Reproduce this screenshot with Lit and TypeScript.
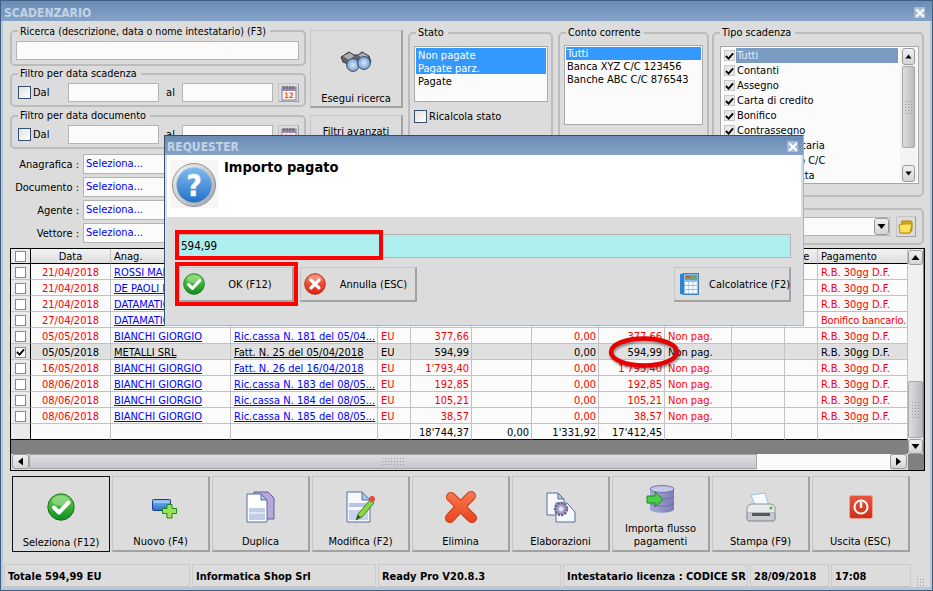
import { LitElement, html, css, svg } from "lit";
import { customElement } from "lit/decorators.js";

const check = (s: number) => html`<svg width=${s} height=${s} viewBox="0 0 28 28"><circle cx="14" cy="14" r="13.2" fill="url(#gGreen)" stroke="#14761c"/><ellipse cx="14" cy="8" rx="9" ry="5" fill="#fff" opacity=".3"/><path d="M7 14.5l5 5 9.5-10" fill="none" stroke="#fff" stroke-width="4" stroke-linecap="round" stroke-linejoin="round"/></svg>`;
const xcirc = (s: number) => html`<svg width=${s} height=${s} viewBox="0 0 28 28"><circle cx="14" cy="14" r="13.2" fill="url(#gRed)" stroke="#b32010"/><ellipse cx="14" cy="8" rx="9" ry="5" fill="#fff" opacity=".25"/><path d="M9 9l10 10M19 9L9 19" fill="none" stroke="#fff" stroke-width="4.2" stroke-linecap="round"/></svg>`;
const question = html`<svg width="48" height="48" viewBox="0 0 48 48"><circle cx="24" cy="25" r="21.5" fill="url(#gSilver)" stroke="#8f9498"/><circle cx="24" cy="25" r="17.5" fill="url(#gBlue)"/><text x="24" y="36" text-anchor="middle" font-family="DejaVu Sans" font-weight="700" font-size="30" fill="#fff" stroke="#dfe6f3" stroke-width=".4">?</text></svg>`;
const binoculars = html`<svg width="32" height="22" viewBox="0 0 32 22"><path d="M1 7l8-5 5 3h4l4-3 7 4 2 6-8 2-5-4h-4l-4 5-7-3z" fill="#62666c" stroke="#33373d"/><path d="M3 6l7-3 4 3-5 4zM18 5l5-2 5 3-5 3z" fill="#aab0b6"/><circle cx="13" cy="15" r="6.4" fill="url(#gLens)" stroke="#454a50"/><circle cx="24" cy="13" r="6.4" fill="url(#gLens)" stroke="#454a50"/></svg>`;
const calendar = html`<svg width="16" height="16" viewBox="0 0 16 16"><rect x="1" y="2" width="14" height="13" fill="#f8f4fc" stroke="#8a7f97"/><rect x="1" y="2" width="14" height="4" fill="#9a8aa8"/><path d="M3 1v3M6 1v3M9 1v3M12 1v3" stroke="#555" /><text x="8" y="13" text-anchor="middle" font-size="7.5" font-weight="700" font-family="DejaVu Sans" fill="#f06010">12</text></svg>`;
const folder = html`<svg width="16" height="15" viewBox="0 0 16 15"><path d="M4 2h9l1 1v8l-2 3H2z" fill="#d9ad19" stroke="#a98510"/><path d="M1 6l4-1h9l-2 9H2z" fill="#fce35c" stroke="#b6900f"/></svg>`;
const calc = html`<svg width="20" height="24" viewBox="0 0 20 24"><path d="M0 2l5-1v22l-5-1z" fill="#2f86cf"/><rect x="3.500" y="1.500" width="15" height="21" fill="#8cc0ec" stroke="#3b7db8"/><rect x="5" y="3" width="12" height="5" fill="#78a078"/><rect x="6" y="4" width="4" height="2" fill="#d84a3a"/>${[0, 1, 2].map((r) => [0, 1, 2].map((c) => svg`<rect x=${5 + c * 4.2} y=${10 + r * 4} width="3.400" height="3" fill="#fff"/>`))}</svg>`;
const plusIcon = html`<svg width="34" height="24" viewBox="0 0 34 24"><g transform="translate(8 2)"><rect x=".5" y="2.500" width="18" height="11" rx="1" fill="url(#gBlue)" stroke="#1c3f9a"/><rect x="1.500" y="3.500" width="16" height="2.500" fill="#9cc4f4"/><path d="M15 7.500h5v4h4.500v5H20v4.500h-5v-4.500h-4.500v-5H15z" fill="#9ae35a" stroke="#1d8a1d"/></g></svg>`;
const dupIcon = html`<svg width="30" height="32" viewBox="0 0 30 32"><path d="M8 1h14l6 6v21H8z" fill="#b6a8d8" stroke="#6a5a98"/><path d="M1 3h14l6 6v22H1z" fill="#fff" stroke="#556f9c"/><path d="M15 3v6h6z" fill="#a8c8ea" stroke="#556f9c"/><rect x="3" y="17" width="16" height="12" fill="#c2cce8"/><path d="M3 22h16" stroke="#fff"/></svg>`;
const editIcon = html`<svg width="30" height="32" viewBox="0 0 30 32"><path d="M1 1h15l8 8v22H1z" fill="#f6f8fd" stroke="#556f9c"/><path d="M16 1v8h8z" fill="#a8c8ea" stroke="#556f9c"/><rect x="3" y="12" width="19" height="4" fill="#b8c4e4"/><rect x="3" y="19" width="19" height="10" fill="#c8d2ec"/><path d="M10 29l2-6L24 9l4 3-12 14z" fill="#8ed63e" stroke="#3b8a1e"/><circle cx="26" cy="8" r="3" fill="#e54b3a"/><path d="M10 29l2-5 3 2z" fill="#444"/></svg>`;
const delIcon = html`<svg width="32" height="32" viewBox="0 0 32 32"><path d="M6 6c6 5 14 15 21 21M26 5C20 11 11 20 5 27" fill="none" stroke="#cf3a15" stroke-width="10" stroke-linecap="round"/><path d="M6 6c6 5 14 15 21 21M26 5C20 11 11 20 5 27" fill="none" stroke="url(#gOrange)" stroke-width="8" stroke-linecap="round"/></svg>`;
const gearIcon = html`<svg width="30" height="31" viewBox="0 0 30 31"><path d="M1 1h11l6 6v16H1z" fill="#f6f8fd" stroke="#556f9c"/><path d="M12 1v6h6z" fill="#a8c8ea" stroke="#556f9c"/><path d="M10 11h11l8 9v10H10z" fill="#f6f8fd" stroke="#556f9c"/><circle cx="15" cy="17" r="6" fill="#a49cc4" stroke="#6a6492" stroke-dasharray="2.4 1" stroke-width="2.4"/><circle cx="15" cy="17" r="2.4" fill="#e4e4f0"/></svg>`;
const dbIcon = html`<svg width="30" height="30" viewBox="0 0 30 30"><path d="M4 4v20c0 5 24 5 24 0V4z" fill="url(#gDb)"/><ellipse cx="16" cy="4" rx="12" ry="3.400" fill="#c6c6ea" stroke="#6f6fa8"/><path d="M4 11c0 4 24 4 24 0M4 18c0 4 24 4 24 0" fill="none" stroke="#6f6fa8"/><path d="M1 11h8V7l8 7.500-8 7.500v-4H1z" fill="#4ccc4c" stroke="#1d8a1d"/></svg>`;
const printIcon = html`<svg width="32" height="30" viewBox="0 0 32 30"><path d="M6 3l14-2 4 13H10z" fill="#f4fbff" stroke="#a0c0d8"/><path d="M2 15c0-1 3-3 5-3h18c2 0 5 2 5 3v6H2z" fill="#e8eaec" stroke="#8a9098"/><path d="M2 21v6c0 1 1 2 2 2h24c1 0 2-1 2-2v-6" fill="#c8ccd0" stroke="#7e8388"/><path d="M7 21h18v3H7z" fill="#54585c"/><circle cx="26" cy="16" r="1.600" fill="#34c040"/></svg>`;
const powerIcon = html`<svg width="24" height="24" viewBox="0 0 24 24"><rect x=".5" y=".5" width="23" height="23" rx="2" fill="url(#gRedSq)" stroke="#f0a090"/><circle cx="12" cy="12" r="6.500" fill="none" stroke="#fff" stroke-width="2"/><path d="M12 7v6" stroke="#fff" stroke-width="2.400"/></svg>`;
const closeX = html`<svg width="10" height="10" viewBox="0 0 10 10"><path d="M2 2l6 6M8 2L2 8" stroke="#fff" stroke-width="2.200" stroke-linecap="square"/></svg>`;
const arrow = (d: string) => html`<svg width="9" height="9" viewBox="0 0 9 9"><path d=${d} fill="#000"/></svg>`;
const UP = "M4.500 2L8.500 7H.5z", DOWN = "M.5 2h8L4.500 7z", LEFT = "M2 4.500L7 .5v8z", RIGHT = "M7 4.500L2 .5v8z";
const tick = html`<svg width="10" height="10" viewBox="0 0 10 10"><path d="M1 5l3 3 5-6" fill="none" stroke="#000" stroke-width="2"/></svg>`;
const dots = (c: number, r: number) => html`<span class="dots" style="grid-template-columns:repeat(${c},1px)">${Array.from({ length: c * r }).map(() => html`<i></i>`)}</span>`;

type Row = { d: string; a: string; doc?: string; v?: string; pay: string; sel?: boolean; on?: boolean };
const rows: Row[] = [
  { d: "21/04/2018", a: "ROSSI MARIO", pay: "R.B. 30gg D.F." },
  { d: "21/04/2018", a: "DE PAOLI LUCA", pay: "R.B. 30gg D.F." },
  { d: "21/04/2018", a: "DATAMATIC", pay: "R.B. 30gg D.F." },
  { d: "27/04/2018", a: "DATAMATIC", pay: "Bonifico bancario." },
  { d: "05/05/2018", a: "BIANCHI GIORGIO", doc: "Ric.cassa N. 181 del 05/04...", v: "377,66", pay: "R.B. 30gg D.F." },
  { d: "05/05/2018", a: "METALLI SRL", doc: "Fatt. N. 25 del 05/04/2018", v: "594,99", pay: "R.B. 30gg D.F.", sel: true, on: true },
  { d: "16/05/2018", a: "BIANCHI GIORGIO", doc: "Fatt. N. 26 del 16/04/2018", v: "1'793,40", pay: "R.B. 30gg D.F." },
  { d: "08/06/2018", a: "BIANCHI GIORGIO", doc: "Ric.cassa N. 183 del 08/05...", v: "192,85", pay: "R.B. 30gg D.F." },
  { d: "08/06/2018", a: "BIANCHI GIORGIO", doc: "Ric.cassa N. 184 del 08/05...", v: "105,21", pay: "R.B. 30gg D.F." },
  { d: "08/06/2018", a: "BIANCHI GIORGIO", doc: "Ric.cassa N. 185 del 08/05...", v: "38,57", pay: "R.B. 30gg D.F." },
];
const colW = [20, 80, 120, 147, 33, 61, 60, 67, 66, 67, 53, 33, 90];
const tipo = ["Tutti", "Contanti", "Assegno", "Carta di credito", "Bonifico", "Contrassegno", "Rimessa bancaria", "Trasferimento C/C", "Rimessa diretta"];
const tools = [
  ["Seleziona (F12)", check(28)], ["Nuovo (F4)", plusIcon], ["Duplica", dupIcon], ["Modifica (F2)", editIcon], ["Elimina", delIcon],
  ["Elaborazioni", gearIcon], ["Importa flusso pagamenti", dbIcon], ["Stampa (F9)", printIcon], ["Uscita (ESC)", powerIcon],
] as const;
const status = [["Totale 594,99 EU", 186], ["Informatica Shop Srl", 184], ["Ready Pro V20.8.3", 183], ["Intestatario licenza : CODICE SR", 185], ["28/09/2018", 79], ["17:08", 80]] as const;

@customElement("app-root")
export class AppRoot extends LitElement {
  static styles = css`
    :host { display: block; width: 933px; height: 591px; overflow: hidden; font-family: "DejaVu Sans", sans-serif; font-stretch: condensed; font-size: 11px; color: #000; }
    * { box-sizing: border-box; }
    .defs { position: absolute; width: 0; height: 0; }
    .win { position: relative; width: 933px; height: 591px; background: #dcdcdc; border: 1px solid #3f5f82; display: flex; flex-direction: column; box-shadow: inset 2px 0 #b9c7d6, inset -2px 0 #b9c7d6, inset 0 -3px #b9c7d6; }
    .tbar { height: 20px; flex: none; background: linear-gradient(#6a8cb5, #85a3c6); color: #c3d3e5; font-weight: 700; font-size: 12px; display: flex; align-items: center; justify-content: space-between; padding: 3px 7px 0 3px; }
    .cl { width: 11px; height: 11px; background: #a5bbd4; display: flex; align-items: center; justify-content: center; }
    .top { display: grid; grid-template-columns: 296px 97px 150px 156px 215px; margin: 9px 0 0 9px; height: 215px; flex: none; }
    .left { display: flex; flex-direction: column; }
    .group { border: 2px solid #bcbcbc; border-radius: 5px; position: relative; }
    .lg { background: #dcdcdc; width: fit-content; margin: -8px 0 0 6px; padding: 0 4px 0 2px; line-height: 14px; font-size: 10.8px; white-space: nowrap; }
    .g1 { height: 36px; padding: 0 4px; }
    .g1 .lg { margin-left: 2px; font-size: 10.6px; }
    .g1 .inp { margin-top: 3px; width: 283px; height: 19px; }
    .inp { background: #fbfbfb; border: 1px solid #b4b4b4; display: block; }
    .g2 { height: 34px; margin-top: 7px; }
    .g3 { height: 34px; margin-top: 8px; }
    .drow { display: flex; align-items: center; margin: 2px 0 0 6px; }
    .cb { width: 13px; height: 13px; border: 1px solid #35506e; background: linear-gradient(135deg, #e0e0e0, #fff); flex: none; }
    .drow .t1 { margin-left: 2px; width: 35px; }
    .drow .inp { width: 91px; height: 19px; }
    .drow .al { width: 23px; text-align: center; }
    .calbtn { width: 21px; height: 19px; margin-left: 5px; display: flex; align-items: center; justify-content: center; background: #dcdcdc; border: 1px solid #c4c4c4; border-right-color: #a0a0a0; border-bottom-color: #a0a0a0; }
    .fields { margin-top: 5px; display: grid; row-gap: 3px; }
    .f { display: grid; grid-template-columns: 69px 217px; column-gap: 4px; align-items: center; height: 20px; }
    .f label { text-align: right; white-space: nowrap; }
    .f .box { height: 20px; background: #fbfbfb; border: 1px solid #b4b4b4; color: #0000ff; padding: 2px 2px; line-height: 14px; }
    .btns { margin-left: 4px; width: 93px; display: flex; flex-direction: column; gap: 7px; }
    .btn { background: #dcdcdc; border: 1px solid #c6c6c6; border-right: 2px solid #a2a2a2; border-bottom: 2px solid #a2a2a2; display: flex; flex-direction: column; align-items: center; text-align: center; }
    .b1 { height: 78px; padding-top: 19px; justify-content: space-between; padding-bottom: 1px; }
    .b2 { height: 78px; padding-top: 9px; }
    .b3 { grid-column: 3 / 6; display: grid; grid-template-columns: 150px 156px 215px; }
    .gs { margin: 2px 0 0 5px; height: 165px; }
    .list { background: #fbfbfb; border: 1px solid #a9a9a9; line-height: 13px; }
    .list div { padding: 0 2px; white-space: nowrap; }
    .hl { background: #3399ff; color: #fff; }
    .stato { margin: 6px 0 0 4px; width: 134px; height: 56px; padding: 1px; }
    .stato div { height: 13px; line-height: 15px; }
    .ric { display: flex; align-items: center; gap: 2px; margin: 8px 0 0 4px; }
    .conto { margin: 5px 0 0 4px; width: 139px; height: 80px; padding: 1px; line-height: 13.2px; }
    .conto div { padding: 0 1px; }
    .gt { margin: 2px 0 0 3px; height: 165px; width: 212px; }
    .tipo { margin: 6px 0 0 6px; width: 199px; height: 138px; display: flex; padding: 1px; overflow: hidden; }
    .tl { flex: 1; min-width: 0; padding-left: 3px; }
    .ti { display: flex; align-items: center; height: 15px; padding: 0 !important; gap: 1px; }
    .ti .ck { width: 11px; height: 11px; background: #e8e8e8; border: 1px solid #c8c8c8; flex: none; display: flex; align-items: center; justify-content: center; }
    .ti .tx { flex: 1; padding-left: 1px; line-height: 16px; height: 15px; }
    .ti .act { background: #7b9bc2; color: #e6eefa; }
    .sb { width: 17px; display: flex; flex-direction: column; background: #f3f3f3; flex: none; }
    .sa { height: 17px; flex: none; border: 1px solid #9a9a9a; border-radius: 3px; background: linear-gradient(#f0f0f0, #d4d4d8); display: flex; align-items: center; justify-content: center; }
    .sth { flex: none; border: 1px solid #a8a8a8; border-radius: 2px; background: linear-gradient(90deg, #dcdce0, #c8c8ce 60%, #b8b8c0); display: flex; align-items: center; justify-content: center; margin: 1px 0; }
    .dots { display: inline-grid; gap: 2px; }
    .dots i { width: 1px; height: 1px; background: #9c9ca4; }
    .gl { grid-column: 3 / 6; margin: 10px 0 0 155px; height: 37px; display: flex; justify-content: flex-end; align-items: center; gap: 6px; padding-right: 6px; }
    .sel { flex: 1; height: 19px; background: #fbfbfb; border: 1px solid #b4b4b4; display: flex; justify-content: flex-end; }
    .sel .sa { width: 15px; height: 17px; }
    .fb { width: 20px; height: 21px; display: flex; align-items: center; justify-content: center; border: 1px solid #c6c6c6; border-right-color: #a2a2a2; border-bottom-color: #a2a2a2; }
    .grid { margin: 3px 0 0 9px; width: 915px; height: 223px; border: 1px solid #000; flex: none; display: flex; flex-direction: column; background: #808080; }
    .gtop { display: flex; height: 205px; flex: none; }
    .pane { width: 897px; flex: none; background: #808080; }
    table { border-collapse: separate; border-spacing: 0; table-layout: fixed; width: 897px; }
    th, td { height: 16px; padding: 2px 3px 0; border-right: 1px solid #c2c2c2; border-bottom: 1px solid #c2c2c2; white-space: nowrap; overflow: hidden; font-weight: 400; line-height: 13px; background: #fbfbfb; text-align: left; }
    th { background: linear-gradient(#f2f2f2, #dedede); border-bottom-color: #000; height: 15px; padding-top: 1px; }
    .fc { border-right-color: #000; padding: 0; text-align: center; background: #eaeaea; }
    th.nt { padding-left: 1px; }
    td.pay { padding-right: 0; }
    td.tight { letter-spacing: -.2px; }
    tr.red td { color: #ff0000; }
    tr.s td { background: #e0e0e0; color: #000; }
    td.lnk a { color: #0000ff; text-decoration: underline; }
    tr.s td.lnk a { color: #000; }
    tr.last td { border-bottom-color: #000; }
    .c { text-align: center; }
    .r { text-align: right; padding-right: 2px; }
    .tc { width: 11px; height: 11px; border: 1px solid #8a8a8a; background: #fff; display: inline-flex; vertical-align: middle; align-items: center; justify-content: center; }
    .vsb { width: 15px; flex: none; background: #f0f0f0; display: flex; flex-direction: column; padding-top: 1px; height: 205px; }
    .vsb .sa { height: 15px; }
    .vsp { flex: 1; }
    .hsb { flex: 1; display: flex; align-items: stretch; padding: 0 1px; background: #dcdcdc; width: 897px; }
    .hsb .sa { width: 17px; height: 15px; }
    .hth { width: 728px; height: 15px; flex: none; background: linear-gradient(#dedee2, #c6c6cc); border: 1px solid #a8a8a8; display: flex; align-items: center; justify-content: flex-end; padding-right: 352px; }
    .htr { flex: 1; background: #fbfbfb; }
    .tools { margin: 5px 0 0 11px; display: flex; gap: 2px; height: 76px; flex: none; }
    .tool { width: 98px; height: 76px; position: relative; display: flex; flex-direction: column; align-items: center; padding: 0 0 2px; }
    .tool .ic { height: 60px; display: flex; align-items: center; justify-content: center; flex: none; }
    .tool .lb { flex: 1; min-height: 0; display: flex; align-items: flex-end; line-height: 13px; justify-content: center; padding: 0 4px; white-space: nowrap; }
    .tool.multi .ic { height: 46px; }
    .tool.multi .lb { white-space: normal; padding: 0 12px; }
    .tool.first { border: 1px solid #111; }
    .status { margin: 12px 0 0 3px; display: flex; gap: 2px; height: 23px; font-weight: 700; font-size: 11px; flex: none; }
    .status div { border: 1px solid #cbcbcb; border-bottom-color: #c2c2c2; padding: 1px 3px 0; display: flex; align-items: center; white-space: nowrap; overflow: hidden; }
    .grip { margin-left: 4px; align-self: flex-end; padding-bottom: 1px; }
    .dlg { position: absolute; left: 163px; top: 134px; width: 640px; height: 191px; background: #dcdcdc; border: 1px solid #34506f; border-right-color: #a9b4c0; border-bottom-color: #a9b4c0; box-shadow: inset 2px 0 #d7dfe8, inset -2px 0 #d7dfe8, inset 0 -2px #d7dfe8; display: flex; flex-direction: column; }
    .dt { height: 19px; flex: none; background: linear-gradient(#6a8cb5, #85a3c6); color: #c3d3e5; font-weight: 700; font-size: 12px; display: flex; align-items: center; justify-content: space-between; padding: 2px 5px 0 2px; }
    .dw { margin: 0 2px; height: 62px; background: #fff; display: flex; padding: 5px 0 0 3px; flex: none; }
    .qb { width: 48px; height: 48px; background: #f6f6f6; }
    .dh { font-size: 14.5px; font-weight: 700; margin: -1px 0 0 6px; line-height: 16px; }
    .dinp { margin: 17px 0 0 11px; width: 615px; height: 24px; background: #aeeeee; border: 1px solid #b4b4b4; padding: 3px 4px; font-size: 11.5px; line-height: 16px; flex: none; }
    .drw { margin: 9px 0 0 14px; display: flex; width: 612px; height: 35px; gap: 6px; flex: none; }
    .db { height: 35px; flex-direction: row; padding: 0 3px; }
    .db svg { flex: none; }
    .db.ok { width: 115px; } .db.an { width: 117px; } .db.ca { width: 117px; margin-left: auto; padding-left: 5px; }
    .db .tx { flex: 1; min-width: 0; text-align: center; white-space: nowrap; padding-top: 1px; }
    .db.ok .tx { padding-left: 6px; } .db.an .tx { padding-left: 9px; } .db.ca .tx { padding-left: 9px; }
    .redbox { position: absolute; border: 4px solid #ff0000; pointer-events: none; }
    .rb1 { left: 10px; top: 94px; width: 208px; height: 30px; }
    .rb2 { left: 10px; top: 126px; width: 123px; height: 44px; }
    .oval { position: absolute; left: 606px; top: 333px; filter: drop-shadow(1px 2px 1px rgba(0,0,0,.4)); }
  `;

  render() {
    return html`
      <svg class="defs"><defs>
        <linearGradient id="gGreen" x1="0" y1="0" x2="0" y2="1"><stop offset="0" stop-color="#6fd44e"/><stop offset="1" stop-color="#0e8c22"/></linearGradient>
        <linearGradient id="gRed" x1="0" y1="0" x2="0" y2="1"><stop offset="0" stop-color="#f8785a"/><stop offset="1" stop-color="#d8230f"/></linearGradient>
        <linearGradient id="gOrange" gradientUnits="userSpaceOnUse" x1="0" y1="0" x2="0" y2="32"><stop offset="0" stop-color="#f77b52"/><stop offset="1" stop-color="#e8431d"/></linearGradient>
        <linearGradient id="gRedSq" x1="0" y1="0" x2="0" y2="1"><stop offset="0" stop-color="#e8553e"/><stop offset="1" stop-color="#c9301c"/></linearGradient>
        <linearGradient id="gBlue" x1="0" y1="0" x2="0" y2="1"><stop offset="0" stop-color="#7fbcf0"/><stop offset="1" stop-color="#2470c8"/></linearGradient>
        <linearGradient id="gSilver" x1="0" y1="0" x2="1" y2="1"><stop offset="0" stop-color="#f4f4f4"/><stop offset="1" stop-color="#9ea4a8"/></linearGradient>
        <linearGradient id="gDb" x1="0" y1="0" x2="1" y2="0"><stop offset="0" stop-color="#a8a8d8"/><stop offset="1" stop-color="#7c7cb8"/></linearGradient>
        <radialGradient id="gLens"><stop offset="0" stop-color="#dbeafc"/><stop offset="1" stop-color="#6f9ed8"/></radialGradient>
      </defs></svg>
      <div class="win">
        <div class="tbar"><span>SCADENZARIO</span><span class="cl">${closeX}</span></div>
        <div class="top">
          <div class="left" style="grid-row: 1 / 3">
            <div class="group g1"><div class="lg">Ricerca (descrizione, data o nome intestatario) (F3)</div><span class="inp"></span></div>
            <div class="group g2"><div class="lg">Filtro per data scadenza</div>${this.dateRow()}</div>
            <div class="group g3"><div class="lg">Filtro per data documento</div>${this.dateRow()}</div>
            <div class="fields">
              ${["Anagrafica :", "Documento :", "Agente :", "Vettore :"].map((l) => html`<div class="f"><label>${l}</label><div class="box">Seleziona...</div></div>`)}
            </div>
          </div>
          <div class="btns" style="grid-row: 1 / 3">
            <div class="btn b1">${binoculars}<span>Esegui ricerca</span></div>
            <div class="btn b2"><span>Filtri avanzati</span></div>
          </div>
          <div class="b3">
            <div class="group gs"><div class="lg">Stato</div>
              <div class="list stato"><div class="hl">Non pagate</div><div class="hl">Pagate parz.</div><div>Pagate</div></div>
              <div class="ric"><span class="cb"></span><span>Ricalcola stato</span></div>
            </div>
            <div class="group gs"><div class="lg">Conto corrente</div>
              <div class="list conto"><div class="hl">Tutti</div><div>Banca XYZ C/C 123456</div><div>Banche ABC C/C 876543</div></div>
            </div>
            <div class="group gt"><div class="lg">Tipo scadenza</div>
              <div class="list tipo">
                <div class="tl">${tipo.map((t, i) => html`<div class="ti"><span class="ck">${tick}</span><span class="tx ${i === 0 ? "act" : ""}">${t}</span></div>`)}</div>
                <div class="sb"><div class="sa">${arrow(UP)}</div><div class="sth" style="height:82px">${dots(3, 5)}</div><div style="flex:1"></div><div class="sa">${arrow(DOWN)}</div></div>
              </div>
            </div>
          </div>
          <div class="group gl"><div class="sel"><div class="sa">${arrow(DOWN)}</div></div><div class="fb">${folder}</div></div>
        </div>

        <div class="grid">
          <div class="gtop">
            <div class="pane">
              <table>
                <colgroup>${colW.map((w) => html`<col style="width:${w}px">`)}</colgroup>
                <thead><tr>
                  <th class="fc"><span class="tc"></span></th><th class="c">Data</th><th>Anag.</th><th></th><th></th><th></th><th></th><th></th><th></th><th></th><th></th><th class="nt">Note</th><th>Pagamento</th>
                </tr></thead>
                <tbody>
                  ${rows.map((r) => html`<tr class="red ${r.sel ? "s" : ""}">
                    <td class="fc"><span class="tc">${r.on ? tick : ""}</span></td>
                    <td class="c">${r.d}</td>
                    <td class="lnk"><a>${r.a}</a></td>
                    <td class="lnk"><a>${r.doc ?? ""}</a></td>
                    <td>${r.v ? "EU" : ""}</td>
                    <td class="r">${r.v ?? ""}</td>
                    <td></td>
                    <td class="r">${r.v ? "0,00" : ""}</td>
                    <td class="r">${r.v ?? ""}</td>
                    <td>${r.v ? "Non pag." : ""}</td>
                    <td></td><td></td>
                    <td class="pay ${r.pay.length > 15 ? "tight" : ""}">${r.pay}</td>
                  </tr>`)}
                  <tr class="last">
                    <td class="fc"></td><td></td><td></td><td></td><td></td>
                    <td class="r">18'744,37</td><td class="r">0,00</td><td class="r">1'331,92</td><td class="r">17'412,45</td>
                    <td></td><td></td><td></td><td></td>
                  </tr>
                </tbody>
              </table>
            </div>
            <div class="vsb"><div class="sa">${arrow(UP)}</div><div class="vsp"></div><div class="sth" style="height:57px">${dots(3, 6)}</div><div class="sa">${arrow(DOWN)}</div></div>
          </div>
          <div class="hsb"><div class="sa">${arrow(LEFT)}</div><div class="hth">${dots(8, 3)}</div><div class="htr"></div><div class="sa">${arrow(RIGHT)}</div></div>
        </div>

        <div class="tools">
          ${tools.map(([l, ic], i) => html`<div class="btn tool ${i === 0 ? "first" : ""} ${i === 6 ? "multi" : ""}"><div class="ic">${ic}</div><div class="lb">${l}</div></div>`)}
        </div>

        <div class="status">
          ${status.map(([t, w]) => html`<div style="width:${w}px">${t}</div>`)}
          <span class="grip">${dots(3, 3)}</span>
        </div>

        <div class="dlg">
          <div class="dt"><span>REQUESTER</span><span class="cl">${closeX}</span></div>
          <div class="dw"><div class="qb">${question}</div><div class="dh">Importo pagato</div></div>
          <div class="dinp">594,99</div>
          <div class="drw">
            <div class="btn db ok">${check(22)}<span class="tx">OK (F12)</span></div>
            <div class="btn db an">${xcirc(22)}<span class="tx">Annulla (ESC)</span></div>
            <div class="btn db ca">${calc}<span class="tx">Calcolatrice (F2)</span></div>
          </div>
          <div class="redbox rb1"></div>
          <div class="redbox rb2"></div>
        </div>

        <svg class="oval" width="76" height="38" viewBox="0 0 76 38"><ellipse cx="37" cy="18" rx="33" ry="13.500" fill="none" stroke="#e60000" stroke-width="4.500"/></svg>
      </div>
    `;
  }

  dateRow() {
    return html`<div class="drow"><span class="cb"></span><span class="t1">Dal</span><span class="inp"></span><span class="al">al</span><span class="inp"></span><span class="calbtn">${calendar}</span></div>`;
  }
}
